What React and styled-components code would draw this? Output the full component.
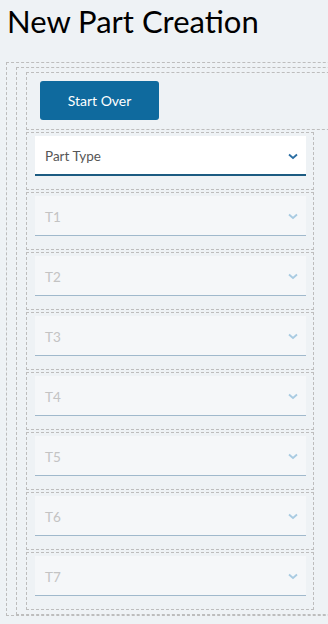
import React from "react";
import styled, { createGlobalStyle } from "styled-components";

const GlobalStyle = createGlobalStyle`
  html, body {
    margin: 0;
    padding: 0;
    background: #eef2f5;
    overflow: hidden;
  }
  body {
    font-family: Lato, "Noto Sans", sans-serif;
  }
`;

const Page = styled.div`
  width: 328px;
  height: 624px;
  overflow: hidden;
`;

const Title = styled.h1`
  margin: 0;
  padding: 2px 0 0 7px;
  height: 62px;
  box-sizing: border-box;
  font-size: 31px;
  font-weight: 400;
  color: #000;
  line-height: 38px;
`;

const Frame = styled.div`
  border: 1px dashed #bdbdbd;
  padding: ${(p) => p.$pad};
  margin-left: ${(p) => p.$left || 0}px;
  width: ${(p) => p.$width}px;
  box-sizing: border-box;
`;

const Stack = styled.div`
  display: flex;
  flex-direction: column;
  gap: 2px;
`;

const ButtonRow = styled.div`
  border: 1px dashed #bdbdbd;
  height: 58px;
  box-sizing: border-box;
  padding: 8px 0 0 13px;
`;

const Button = styled.button`
  width: 119px;
  height: 39px;
  border: none;
  border-radius: 3px;
  background: #0f6a9e;
  color: #fff;
  font-family: Lato, "Noto Sans", sans-serif;
  font-size: 14px;
  cursor: pointer;
`;

const FieldBox = styled.div`
  width: 288px;
  height: 58px;
  box-sizing: border-box;
  border: 1px dashed #bdbdbd;
  padding: 3px 7px 0 8px;
`;

const Select = styled.div`
  height: 40px;
  box-sizing: border-box;
  display: flex;
  align-items: center;
  justify-content: space-between;
  padding: 2px 8px 0 10px;
  background: ${(p) => (p.$disabled ? "#f5f7f9" : "#fff")};
  border-bottom: ${(p) => (p.$disabled ? "1.5px solid #a0b9cc" : "2px solid #1c5c82")};
  color: ${(p) => (p.$disabled ? "#c3c3c3" : "#565656")};
  font-size: 13.5px;
`;

const Chevron = ({ color }) => (
  <svg width="10" height="7" viewBox="0 0 10 7">
    <path d="M1 1.5 L5 5 L9 1.5" fill="none" stroke={color} strokeWidth="1.8" />
  </svg>
);

const fields = ["T1", "T2", "T3", "T4", "T5", "T6", "T7"];

export default function App() {
  return (
    <Page>
      <GlobalStyle />
      <Title>New Part Creation</Title>
      <Frame $left={6} $width={360} $pad="4px 0 0 9px">
        <Frame $width={360} $pad="4px 0 4px 9px">
          <Stack>
            <ButtonRow>
              <Button>Start Over</Button>
            </ButtonRow>
            <FieldBox>
              <Select>
                Part Type
                <Chevron color="#2b6ea3" />
              </Select>
            </FieldBox>
            {fields.map((f) => (
              <FieldBox key={f}>
                <Select $disabled>
                  {f}
                  <Chevron color="#a9cbe2" />
                </Select>
              </FieldBox>
            ))}
          </Stack>
        </Frame>
      </Frame>
    </Page>
  );
}
